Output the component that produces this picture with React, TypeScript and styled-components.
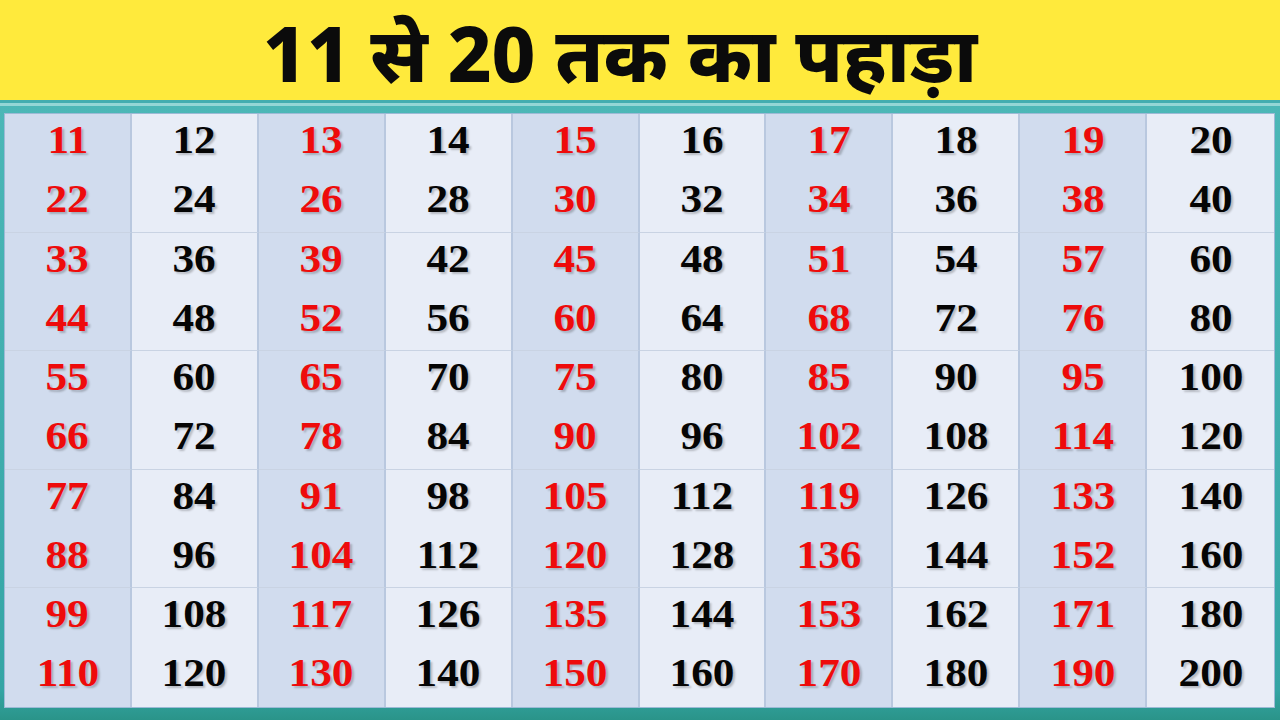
import React from "react";
import styled, { createGlobalStyle } from "styled-components";

const Global = createGlobalStyle`
  html, body { margin: 0; padding: 0; background: #ffeb3b; }
  #root { width: 1280px; height: 720px; }
`;

const Page = styled.div`
  width: 1280px;
  height: 720px;
  display: flex;
  flex-direction: column;
  overflow: hidden;
`;

const Header = styled.header`
  height: 100px;
  background: #ffea3c;
  display: flex;
  align-items: center;
  justify-content: center;
  padding-right: 40px;
  padding-top: 6px;
  box-sizing: border-box;
`;

const Title = styled.h1`
  margin: 0;
  font-family: "Noto Sans", "Noto Sans Devanagari", "Open Sans", sans-serif;
  font-weight: 800;
  font-size: 76px;
  line-height: 1;
  color: #0b0b0b;
`;

const Frame = styled.div`
  flex: 1;
  border-top: 3px solid #43adb0;
  box-shadow: inset 0 3px 0 #94d6d6;
  padding: 10px 5px 12px 4px;
  display: flex;
  background: linear-gradient(#4cb7b7, #35a5a5 95%, #2a9489);
`;

const Grid = styled.div`
  flex: 1;
  display: grid;
  grid-template-columns: repeat(10, 1fr);
  grid-template-rows: repeat(5, 1fr);
  border: 1px solid #9dbad6;
  background: #e8edf7;
`;

const Cell = styled.div<{ $shade: boolean; $last: boolean; $lastRow: boolean }>`
  background: ${(p) => (p.$shade ? "#d1dcee" : "#e8edf7")};
  border-right: ${(p) => (p.$last ? "none" : "2px solid #b9c8df")};
  border-bottom: ${(p) => (p.$lastRow ? "none" : "1px solid #c9d3e3")};
  display: flex;
  flex-direction: column;
  justify-content: flex-start;
  align-items: center;
  gap: 18px;
  padding-top: 5px;
`;

const Num = styled.div<{ $red: boolean }>`
  font-family: "Liberation Serif", "Times New Roman", serif;
  font-weight: 700;
  font-size: 40px;
  line-height: 41px;
  height: 41px;
  transform: scaleX(1.08);
  color: ${(p) => (p.$red ? "#ee0b0b" : "#050505")};
  text-shadow: 2px 2px 2px rgba(0, 0, 0, 0.22);
`;

export default function App() {
  const bases = [11, 12, 13, 14, 15, 16, 17, 18, 19, 20];
  const cells: React.ReactNode[] = [];
  for (let g = 0; g < 5; g++) {
    bases.forEach((b, ci) => {
      const red = ci % 2 === 0;
      cells.push(
        <Cell key={`${g}-${ci}`} $shade={red} $last={ci === 9} $lastRow={g === 4}>
          <Num $red={red}>{b * (g * 2 + 1)}</Num>
          <Num $red={red}>{b * (g * 2 + 2)}</Num>
        </Cell>
      );
    });
  }
  return (
    <Page>
      <Global />
      <Header>
        <Title>11 से 20 तक का पहाड़ा</Title>
      </Header>
      <Frame>
        <Grid>{cells}</Grid>
      </Frame>
    </Page>
  );
}
